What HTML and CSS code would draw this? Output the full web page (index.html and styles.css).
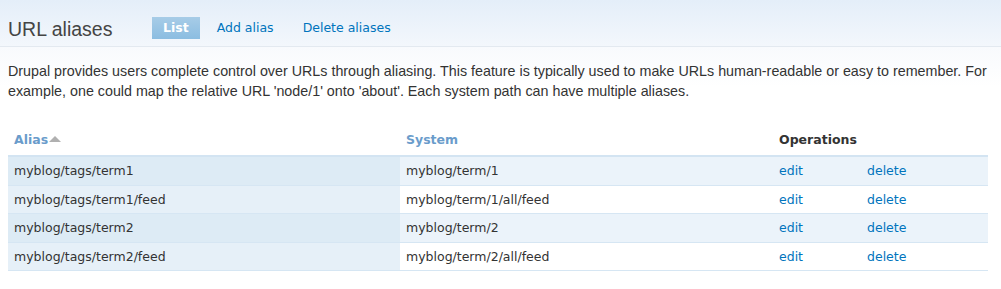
FILE: index.html
```html
<!DOCTYPE html>
<html lang="en">
<head>
    <meta charset="UTF-8">
    <title>URL aliases</title>
    <link rel="stylesheet" href="styles.css">
</head>
<body>
    <div id="branding">
        <h1 class="page-title">URL aliases</h1>
        <ul class="tabs">
            <li class="active"><a href="#">List</a></li>
            <li><a href="#">Add alias</a></li>
            <li><a href="#">Delete aliases</a></li>
        </ul>
    </div>
    <div id="page">
        <p class="help">Drupal provides users complete control over URLs through aliasing. This feature is typically used to make URLs human-readable or easy to remember. For example, one could map the relative URL 'node/1' onto 'about'. Each system path can have multiple aliases.</p>
        <table class="aliases">
            <thead>
                <tr>
                    <th class="col-alias"><a href="#">Alias</a><span class="sort-arrow"></span></th>
                    <th class="col-system"><a href="#">System</a></th>
                    <th colspan="2" class="ops">Operations</th>
                </tr>
            </thead>
            <tbody>
                <tr class="odd">
                    <td class="active">myblog/tags/term1</td>
                    <td>myblog/term/1</td>
                    <td class="col-edit"><a href="#">edit</a></td>
                    <td><a href="#">delete</a></td>
                </tr>
                <tr class="even">
                    <td class="active">myblog/tags/term1/feed</td>
                    <td>myblog/term/1/all/feed</td>
                    <td class="col-edit"><a href="#">edit</a></td>
                    <td><a href="#">delete</a></td>
                </tr>
                <tr class="odd">
                    <td class="active">myblog/tags/term2</td>
                    <td>myblog/term/2</td>
                    <td class="col-edit"><a href="#">edit</a></td>
                    <td><a href="#">delete</a></td>
                </tr>
                <tr class="even">
                    <td class="active">myblog/tags/term2/feed</td>
                    <td>myblog/term/2/all/feed</td>
                    <td class="col-edit"><a href="#">edit</a></td>
                    <td><a href="#">delete</a></td>
                </tr>
            </tbody>
        </table>
    </div>
</body>
</html>
```

FILE: styles.css
```css
body {
    margin: 0;
    background: #fff;
    color: #333;
    font-family: "DejaVu Sans", Verdana, sans-serif;
    font-size: 12.5px;
}

a {
    color: #0074bd;
    text-decoration: none;
}

#branding {
    display: flex;
    align-items: flex-end;
    height: 46px;
    padding: 0 8px;
    background: linear-gradient(#e4eef9, #f3f7fc);
    border-bottom: 1px solid #e3e9f0;
}

.page-title {
    margin: 0 0 5px 0;
    font-family: "Liberation Sans", Arial, sans-serif;
    font-size: 19.5px;
    font-weight: normal;
    color: #444;
    width: 144px;
}

.tabs {
    display: flex;
    list-style: none;
    margin: 0 0 7px 0;
    padding: 0;
}

.tabs li a {
    display: block;
    height: 22px;
    line-height: 22px;
    padding: 0 16px 0 13px;
}

.tabs li.active a {
    background: linear-gradient(#a7cce7, #8bbde1);
    color: #fff;
    font-weight: bold;
    padding: 0 11px;
    margin-right: 4px;
}

#page {
    padding: 14px 13px 0 8px;
    background: linear-gradient(#f8fafd, #fff 40px);
}

.help {
    margin: 0 0 29px 0;
    font-family: "Liberation Sans", Arial, sans-serif;
    font-size: 14.3px;
    line-height: 20px;
    color: #333;
}

.aliases {
    width: 100%;
    border-collapse: collapse;
}

.aliases th {
    text-align: left;
    font-weight: bold;
    padding: 0 6px 6px 6px;
    height: 19px;
    border-bottom: 2px solid #d3e4f2;
}

.aliases th a {
    color: #6a9ccb;
}

.aliases th.ops {
    color: #333;
}

.col-alias {
    width: 380px;
}

.col-system {
    width: 361px;
}

.sort-arrow {
    display: inline-block;
    width: 0;
    height: 0;
    margin-left: 1px;
    border-left: 6px solid transparent;
    border-right: 6px solid transparent;
    border-bottom: 6px solid #b0b0b0;
    vertical-align: 2px;
}

.aliases td {
    height: 27.5px;
    padding: 0 6px;
    border-bottom: 1px solid #d6e6f3;
}

.aliases td.col-edit {
    width: 76px;
}

.aliases tr.odd td {
    background: #ebf3fa;
}

.aliases tr.even td {
    background: #fff;
}

.aliases tr.odd td.active {
    background: #ddebf5;
}

.aliases tr.even td.active {
    background: #e6f0f8;
}
```
